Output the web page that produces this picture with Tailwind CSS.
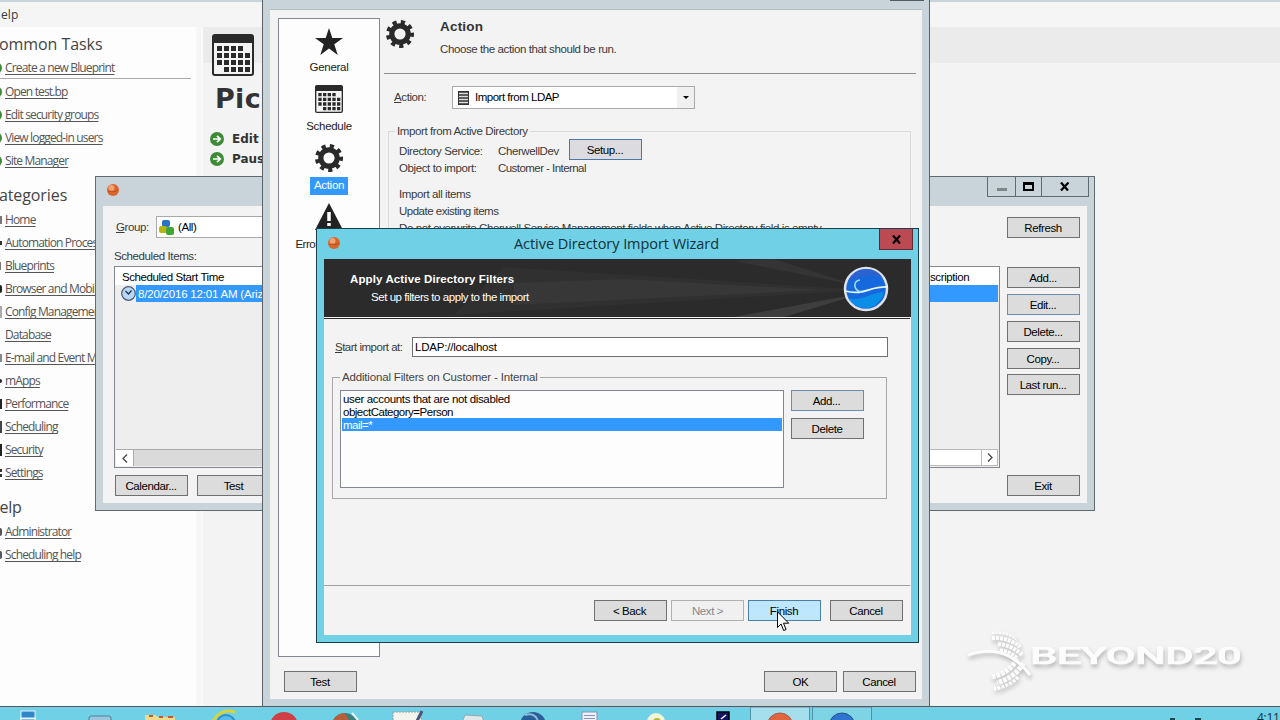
<!DOCTYPE html>
<html lang="en">
<head>
  <meta charset="UTF-8" />
  <meta name="viewport" content="width=device-width, initial-scale=1.0" />
  <title>Active Directory Import Wizard</title>
  <script src="https://cdn.jsdelivr.net/npm/@tailwindcss/browser@4"></script>
</head>
<body class="relative w-[1280px] h-[720px] overflow-hidden bg-[#f3f3f3] font-['Liberation_Sans',Arial,sans-serif] text-[11.5px] leading-[17px] tracking-[-0.4px] text-[#3a3a3a] cursor-default">

  <!-- Shared icons -->
  <svg class="hidden">
    <symbol id="gear" viewBox="0 0 28 28">
      <circle cx="14" cy="14" r="8.2" fill="none" stroke="#2a2a2a" stroke-width="5.2" />
      <circle cx="14" cy="14" r="12" fill="none" stroke="#2a2a2a" stroke-width="4" pathLength="18" stroke-dasharray="1 1" stroke-dashoffset="0.3" />
    </symbol>
    <symbol id="calendar" viewBox="0 0 42 42">
      <rect x="1" y="1" width="40" height="40" rx="2" fill="#f4f4f4" stroke="#2a2a2a" stroke-width="2" />
      <path d="M1 1h40v8H1z" fill="#2a2a2a" />
      <path d="M5 14.5h26M5 21.5h33M5 28.500h33M12 35.500h26" stroke="#2a2a2a" stroke-width="5" stroke-dasharray="5 2" />
    </symbol>
    <symbol id="ball" viewBox="0 0 14 14">
      <circle cx="7" cy="7" r="6" fill="#d9652c" />
      <circle cx="5.500" cy="5" r="3" fill="#f3a271" />
      <path d="M2 9c3-2 6 1 10-2" stroke="#b5501f" fill="none" />
    </symbol>
    <symbol id="go" viewBox="0 0 14 14">
      <circle cx="7" cy="7" r="7" fill="#3d8b37" />
      <path d="M3 7h7M7 3.800L10.300 7 7 10.200" stroke="#fff" stroke-width="1.700" fill="none" />
    </symbol>
  </svg>

  <!-- Main application -->
  <main class="flex flex-col h-[706px]">
    <div class="h-[2px] bg-[#c8d4d9]"></div>
    <div class="h-[25px] leading-[26px] -ml-[8px] bg-[#f5f5f5] font-['Open_Sans',sans-serif] text-[12px] tracking-[0.1px]">Help</div>
    <div class="flex grow">
      <nav class="w-[195px] bg-[#fdfdfd] font-['Open_Sans',sans-serif] text-[12px] tracking-[-0.85px] text-[#555] whitespace-nowrap">
        <h2 class="h-[30px] leading-[35px] -ml-[11px] text-[16px] tracking-[-0.07px] text-[#444]">Common Tasks</h2>
        <ul class="leading-[23px] underline underline-offset-2 [text-decoration-skip-ink:none]">
          <li class="flex items-center h-[22px] w-[191px] border-b border-[#aaa]"><svg class="size-3 -ml-[10px] mr-[3px]"><use href="#go" /></svg>Create a new Blueprint</li>
          <li class="flex items-center h-[23px] mt-px"><svg class="size-3 -ml-[10px] mr-[3px]"><use href="#go" /></svg>Open test.bp</li>
          <li class="flex items-center h-[23px]"><svg class="size-3 -ml-[10px] mr-[3px]"><use href="#go" /></svg>Edit security groups</li>
          <li class="flex items-center h-[23px]"><svg class="size-3 -ml-[10px] mr-[3px]"><use href="#go" /></svg>View logged-in users</li>
          <li class="flex items-center h-[23px]"><svg class="size-3 -ml-[10px] mr-[3px]"><use href="#go" /></svg>Site Manager</li>
        </ul>
        <h2 class="h-[36px] leading-[47px] -ml-[11px] text-[16px] tracking-[-0.1px] text-[#444]">Categories</h2>
        <ul class="leading-[23px] underline underline-offset-2 [text-decoration-skip-ink:none]">
          <li class="flex items-center h-[23px]"><i class="w-[2px] h-2 mr-[3px] bg-[#777]"></i>Home</li>
          <li class="flex items-center h-[23px]"><i class="w-[2px] h-1 mr-[3px] bg-[#333]"></i>Automation Processes</li>
          <li class="flex items-center h-[23px]"><i class="w-px h-2 mr-[4px] bg-[#777]"></i>Blueprints</li>
          <li class="flex items-center h-[23px]"><i class="w-[2px] h-2 mr-[3px] rounded-r-full bg-[#222]"></i>Browser and Mobile</li>
          <li class="flex items-center h-[23px]"><i class="w-[2px] h-3 mr-[3px] bg-[#aaa]"></i>Config Management</li>
          <li class="flex items-center h-[23px] pl-[5px]">Database</li>
          <li class="flex items-center h-[23px]"><i class="w-[2px] h-2 mr-[3px] bg-[#888]"></i>E-mail and Event Mon</li>
          <li class="flex items-center h-[23px]"><i class="w-[2px] h-1 mr-[3px] rounded-r-full bg-[#222]"></i>mApps</li>
          <li class="flex items-center h-[23px]"><i class="w-[2px] h-2.5 mr-[3px] bg-[#222]"></i>Performance</li>
          <li class="flex items-center h-[23px]"><i class="w-[2px] h-3 mr-[3px] bg-[#444]"></i>Scheduling</li>
          <li class="flex items-center h-[23px]"><i class="w-[2px] h-3 mr-[3px] bg-[#222]"></i>Security</li>
          <li class="flex items-center h-[23px]"><i class="w-[2px] h-2 mr-[3px] border-y-3 border-[#333]"></i>Settings</li>
        </ul>
        <h2 class="h-[36px] leading-[46px] -ml-[12px] text-[16px] tracking-[-0.3px] text-[#444]">Help</h2>
        <ul class="leading-[23px] underline underline-offset-2 [text-decoration-skip-ink:none]">
          <li class="flex items-center h-[23px]"><i class="w-[2px] h-2 mr-[3px] rounded-r-full bg-[#555]"></i>Administrator</li>
          <li class="flex items-center h-[23px]"><i class="w-[2px] h-2 mr-[3px] rounded-r-full bg-[#555]"></i>Scheduling help</li>
        </ul>
      </nav>
      <div class="w-[8px] bg-[#f5f5f5] border-x-2 border-[#fafafa]"></div>
      <section class="grow text-[#333]">
        <div class="h-[36px] pt-[7px] pl-[9px] bg-[#ebebeb]">
          <svg class="w-[42px] h-[42px]"><use href="#calendar" /></svg>
        </div>
        <h1 class="pl-[12px] mt-[18px] font-['DejaVu_Sans',sans-serif] font-bold text-[27px] leading-[36px] tracking-[0.3px]">Pick</h1>
        <ul class="pl-[7px] mt-[12px] font-['DejaVu_Sans',sans-serif] font-bold text-[12px] leading-[20px] tracking-[0px]">
          <li class="flex items-center gap-2"><svg class="size-3.5"><use href="#go" /></svg>Edit schedule</li>
          <li class="flex items-center gap-2"><svg class="size-3.5"><use href="#go" /></svg>Pause</li>
        </ul>
      </section>
    </div>
  </main>

  <!-- Scheduler window -->
  <section class="absolute left-[95px] top-[176px] w-[1000px] h-[335px] flex flex-col border border-[#5d6b72] bg-[#c8d4d9] px-[7px] pb-[7px]">
    <header class="flex justify-between h-[29px] shrink-0">
      <svg class="size-[14px] ml-[3px] mt-[6px]"><use href="#ball" /></svg>
      <div class="flex h-[20px] -mr-[2px] border border-t-0 border-[#5d6b72] divide-x divide-[#5d6b72] text-black">
        <div class="w-[28px] pt-[11px]"><div class="w-[10px] h-[3px] mx-auto bg-[#7d868a]"></div></div>
        <div class="w-[26px] pt-[5px]"><div class="w-[11px] h-[9px] mx-auto border-2 border-t-3 border-black"></div></div>
        <div class="w-[46px] pt-[5px]"><svg class="mx-auto" width="10" height="9" viewBox="0 0 10 9"><path d="M1 .5l7 8M8.500.5l-7.500 8" stroke="#000" stroke-width="2.200" /></svg></div>
      </div>
    </header>
    <div class="flex justify-between grow bg-[#f3f3f3] pl-[11px] pr-[7px] pt-[10px] text-black">
      <div class="w-[240px]">
        <div class="flex items-center h-[22px] text-[#3a3a3a]">
          <span class="w-[42px] pl-[2px]"><u>G</u>roup:</span>
          <div class="flex items-center grow h-[22px] border border-[#aaa] bg-white text-black gap-1 pl-[2px]">
            <svg width="15" height="15" viewBox="0 0 15 15"><rect x="3" y="0" width="8" height="7" rx="2" fill="#2a72c8" /><rect x="0" y="6" width="8" height="7" rx="2" fill="#b6b40e" /><rect x="7" y="7" width="8" height="8" rx="2" fill="#3fa535" /></svg>
            (All)
          </div>
        </div>
        <p class="mt-[10px] mb-px text-[#3a3a3a]">Scheduled Items:</p>
        <div class="flex flex-col h-[202px] border border-[#828790] bg-[#eee]">
          <div class="h-[18px] leading-[20px] pl-[7px] bg-white">Scheduled Start Time</div>
          <div class="flex items-center h-[17px] pl-[6px]">
            <svg class="shrink-0" width="15" height="15" viewBox="0 0 15 15"><circle cx="7.500" cy="7.500" r="6.800" fill="#b9d8f4" stroke="#51617c" stroke-width="1.300" /><path d="M4.500 5l3 3 3-3.500" stroke="#1d2f55" stroke-width="1.200" fill="none" /></svg>
            <div class="grow h-[17px] leading-[18px] pl-[2px] bg-[#3399ff] text-white tracking-[-0.2px] whitespace-nowrap overflow-hidden">8/20/2016 12:01 AM (Arizona)</div>
          </div>
          <div class="mt-auto mx-px mb-px flex h-[17px] bg-[#dadada] border-t border-[#aaa]">
            <div class="w-[18px] bg-white border-r border-[#aaa] flex items-center justify-center"><svg width="6" height="9" viewBox="0 0 6 9"><path d="M5 .5l-4 4 4 4" stroke="#444" stroke-width="1.300" fill="none" /></svg></div>
          </div>
        </div>
        <div class="flex gap-[9px] mt-[7px] ml-px text-center leading-[20px]">
          <div class="w-[73px] h-[21px] pr-px border border-[#707070] bg-[#dcdcdc]">Calendar...</div>
          <div class="w-[73px] h-[21px] border border-[#707070] bg-[#dcdcdc]">Test</div>
        </div>
      </div>
      <div class="flex gap-[7px]">
        <div class="w-[75px] flex flex-col h-[202px] mt-[50px] border border-[#828790] bg-[#eee]">
          <div class="h-[18px] leading-[20px] pl-[4px] bg-white">scription</div>
          <div class="h-[17px] mr-px bg-[#3399ff]"></div>
          <div class="mt-auto mr-px mb-px flex justify-end h-[17px] bg-white border border-[#bbb]">
            <div class="w-[16px] border-l border-[#bbb] flex items-center justify-center"><svg width="6" height="9" viewBox="0 0 6 9"><path d="M1 .5l4 4-4 4" stroke="#444" stroke-width="1.300" fill="none" /></svg></div>
          </div>
        </div>
        <div class="w-[73px] text-center leading-[20px]">
          <div class="h-[21px] mt-px pr-px border border-[#707070] bg-[#dcdcdc]">Refresh</div>
          <div class="h-[21px] mt-[29px] pr-px border border-[#707070] bg-[#dcdcdc]">Add...</div>
          <div class="h-[21px] mt-[6px] pr-px border border-[#6f8cae] bg-[#dcdcdc]">Edit...</div>
          <div class="h-[21px] mt-[6px] pr-px border border-[#707070] bg-[#dcdcdc]">Delete...</div>
          <div class="h-[21px] mt-[6px] pr-px border border-[#707070] bg-[#dcdcdc]">Copy...</div>
          <div class="h-[21px] mt-[5px] pr-px border border-[#707070] bg-[#dcdcdc]">Last run...</div>
          <div class="h-[21px] mt-[80px] pr-px border border-[#707070] bg-[#dcdcdc]">Exit</div>
        </div>
      </div>
    </div>
  </section>

  <!-- Scheduled item dialog -->
  <section class="absolute left-[262px] top-0 w-[668px] h-[707px] flex flex-col border border-t-0 border-[#5a6266] bg-[#c8d4d9] px-[7px] pb-[7px]">
    <header class="flex justify-end h-[9px] shrink-0"><div class="w-[34px] h-px mr-[-2px] bg-[#4e5b62]"></div></header>
    <div class="flex flex-col grow bg-[#f3f3f3] border-t border-[#b3bec3] px-[8px] pt-[8px]">
      <div class="flex gap-[4px]">
        <ul class="w-[102px] h-[639px] shrink-0 border border-[#828790] bg-[#fdfdfd] flex flex-col items-center text-center tracking-[-0.3px] text-[#222]">
          <li class="h-[59px] pt-[9px] flex flex-col items-center">
            <svg width="28" height="27" viewBox="0 0 28 27"><path d="M14 0l3.300 10H28l-8.700 6.200L22.700 27 14 20.500 5.300 27l3.400-10.800L0 10h10.700z" fill="#222" /></svg>
            <span class="mt-[4px]">General</span>
          </li>
          <li class="h-[59px] pt-[7px] flex flex-col items-center">
            <svg width="28" height="28"><use href="#calendar" /></svg>
            <span class="mt-[5px]">Schedule</span>
          </li>
          <li class="h-[59px] pt-[7px] flex flex-col items-center">
            <svg width="28" height="28"><use href="#gear" /></svg>
            <span class="mt-[5px] w-[38px] h-[18px] bg-[#3399ff] text-white">Action</span>
          </li>
          <li class="h-[59px] pt-[7px] flex flex-col items-center">
            <svg width="28" height="27" viewBox="0 0 28 27"><path d="M14 0l14 27H0z" fill="#222" /><path d="M14 9v9M14 20v3" stroke="#fff" stroke-width="3.500" /></svg>
            <span class="mt-[6px] tracking-[-0.5px]">Error Handling</span>
          </li>
        </ul>
        <div class="grow -mr-[2px]">
          <header class="flex h-[56px] border-b border-[#909090] pl-[2px] pt-[1px]">
            <svg class="mt-px" width="28" height="28"><use href="#gear" /></svg>
            <div class="ml-[26px]">
              <h2 class="font-bold text-[13.500px] leading-[16px] tracking-[0.2px] text-[#333]">Action</h2>
              <p class="mt-[6px]">Choose the action that should be run.</p>
            </div>
          </header>
          <div class="flex items-center h-[23px] mt-[12px] pl-[10px]">
            <span class="w-[58px]"><u>A</u>ction:</span>
            <div class="flex items-center w-[243px] h-[23px] border border-[#aaa] bg-white text-black">
              <svg class="ml-[5px] mr-[6px]" width="11" height="14" viewBox="0 0 11 14"><rect width="11" height="14" fill="#333" /><path d="M1 2.500h9M1 5.500h9M1 8.500h9M1 11.500h9" stroke="#ddd" stroke-width="1.500" /></svg>
              <span class="grow tracking-[-0.5px]">Import from LDAP</span>
              <div class="w-[17px] h-[21px] bg-[#f0f0f0] flex items-center justify-center"><svg width="6" height="3" viewBox="0 0 6 3"><path d="M0 0h6L3 3z" fill="#000" /></svg></div>
            </div>
          </div>
          <fieldset class="w-[523px] h-[140px] ml-[4px] mt-[14px] border border-[#dadada] pl-[10px] text-[11.500px]">
            <legend class="-ml-[4px] px-[2px]">Import from Active Directory</legend>
            <div class="flex">
              <div class="grid grid-cols-[99px_auto] pt-[3px]">
                <span>Directory Service:</span><span>CherwellDev</span>
                <span>Object to import:</span><span class="w-[91px] tracking-[-0.55px]">Customer - Internal</span>
              </div>
              <div class="w-[73px] h-[21px] -ml-[20px] -mt-px pr-px text-center leading-[21px] text-black border border-[#4a78a8] bg-[#dcdce0]">Setup...</div>
            </div>
            <p class="mt-[9px]">Import all items</p>
            <p class="tracking-[-0.5px]">Update existing items</p>
            <p>Do not overwrite Cherwell Service Management fields when Active Directory field is empty.</p>
          </fieldset>
        </div>
      </div>
      <footer class="flex mt-[14px] ml-[6px] mr-[-2px] text-center text-black leading-[20px]">
        <div class="w-[73px] h-[21px] pr-px border border-[#707070] bg-[#dcdcdc] mr-auto">Test</div>
        <div class="w-[73px] h-[21px] border border-[#707070] bg-[#dcdcdc] mr-[6px]">OK</div>
        <div class="w-[73px] h-[21px] pr-px border border-[#707070] bg-[#dcdcdc]">Cancel</div>
      </footer>
    </div>
  </section>

  <!-- Import wizard -->
  <section class="absolute left-[316px] top-[228px] w-[603px] h-[415px] flex flex-col border border-[#17404f] bg-[#70d1e6] px-[7px] pb-[7px]">
    <header class="relative flex justify-center h-[30px] shrink-0 font-['Open_Sans',sans-serif] text-[14.5px] leading-[29px] tracking-[-0.06px] text-[#12303a]">
      <svg class="absolute left-[3px] top-[7px] size-[14px]"><use href="#ball" /></svg>
      <span class="-ml-[2px]">Active Directory Import Wizard</span>
      <div class="absolute -right-[2px] top-0 w-[34px] h-[21px] border border-t-0 border-[#5d2a31] bg-[#bb4a52] flex items-center justify-center"><svg width="9" height="9" viewBox="0 0 9 9"><path d="M1 .5l7 8M8 .5l-7 8" stroke="#000" stroke-width="2.200" /></svg></div>
    </header>
    <div class="relative h-[58px] shrink-0 bg-[#2b2b2b] text-white">
      <svg class="absolute inset-0" width="587" height="58" viewBox="0 0 587 58">
        <path d="M540 31L180 8 130 56z" fill="#303030" />
        <path d="M500 31L300 20 190 24 190 46z" fill="#373737" />
        <path d="M535 27L410 2 450 0z" fill="#343434" />
        <path d="M540 34L410 58 460 58z" fill="#3e3e3e" />
        <circle cx="542" cy="30" r="21" fill="#1668dd" stroke="#dfe2ec" stroke-width="2.500" />
        <path d="M524 22a20 20 0 0 1 35-3c-8-4-20-3-35 3z" fill="#2c62d0" />
        <path d="M524 39c12 4 22-5 36-6-3 10-10 16-18 16-8 0-14-4-18-10z" fill="#0a8fe8" />
        <path d="M521 32c20 5 24-5 43-4" stroke="#e6f6ff" stroke-width="1.800" fill="none" />
        <path d="M537 33c-8-2-8-11-1-12" stroke="#9fe0fa" stroke-width="1.500" fill="none" />
      </svg>
      <div class="relative pl-[26px] pt-[12px]">
        <h3 class="font-bold text-[11.500px] leading-[17px] tracking-[0.12px]">Apply Active Directory Filters</h3>
        <p class="pl-[21px] leading-[18px] tracking-[-0.45px]">Set up filters to apply to the import</p>
      </div>
    </div>
    <div class="flex flex-col grow bg-[#f3f3f3]">
      <div class="h-px mt-px bg-[#2b2b2b] mr-px"></div>
      <div class="flex items-center mt-[18px] ml-[11px]">
        <span class="w-[77px] tracking-[-0.5px]"><u>S</u>tart import at:</span>
        <div class="w-[476px] h-[20px] leading-[19px] border border-[#707070] bg-white text-black pl-[2px] tracking-[-0.2px]">LDAP://localhost</div>
      </div>
      <fieldset class="w-[555px] h-[130px] ml-[8px] mt-[12px] border border-[#a8a8a8] px-[7px]">
        <legend class="px-[2px] text-[#444] tracking-[-0.17px]">Additional Filters on Customer - Internal</legend>
        <div class="flex gap-[7px] mt-[4px] text-black">
          <ul class="w-[444px] h-[98px] pt-px px-px border border-[#828790] bg-[#fdfdfd] leading-[15px]">
            <li class="h-[13px] pl-px tracking-[-0.35px]">user accounts that are not disabled</li>
            <li class="h-[13px] pl-px tracking-[-0.5px]">objectCategory=Person</li>
            <li class="h-[13px] pl-px tracking-[-0.5px] bg-[#3399ff] text-white">mail=*</li>
          </ul>
          <div class="w-[73px] text-center leading-[20px]">
            <div class="h-[21px] pr-[2px] border border-[#6f8cae] bg-[#dcdcdc]">Add...</div>
            <div class="h-[21px] mt-[7px] pr-px border border-[#707070] bg-[#dcdcdc]">Delete</div>
          </div>
        </div>
      </fieldset>
      <footer class="flex mt-auto h-[50px] mr-px border-t border-[#a0a0a0] pt-[14px] pr-[7px] justify-end text-center leading-[20px] text-black">
        <div class="w-[73px] h-[21px] pr-[2px] border border-[#707070] bg-[#dcdcdc]">&lt; Back</div>
        <div class="w-[73px] h-[21px] ml-[4px] border border-[#b0b0b0] bg-[#f0f0f0] text-[#888]">Next &gt;</div>
        <div class="w-[73px] h-[21px] ml-[4px] pr-px border border-[#4a80a8] bg-[#bee6fd]">Finish</div>
        <div class="w-[73px] h-[21px] ml-[9px] pr-px border border-[#707070] bg-[#dcdcdc]">Cancel</div>
      </footer>
    </div>
  </section>

  <!-- Watermark -->
  <svg class="absolute left-[960px] top-[625px] drop-shadow-[1px_3px_2px_rgba(0,0,0,0.25)]" width="290" height="70" viewBox="0 0 290 70">
    <g fill="none" stroke="#fcfcfc">
      <path d="M32 8q14-2 24 6" stroke-width="2.500" stroke-dasharray="2.500 1" />
      <path d="M32 13q16-1 28 9" stroke-width="4" stroke-dasharray="3 1" />
      <path d="M38 19q14 1 24 11" stroke-width="4" stroke-dasharray="3 1" />
      <path d="M40 25q10 1 18 9" stroke-width="3.500" stroke-dasharray="3 1" />
      <path d="M57 34q-7 14-26 18" stroke-width="5" stroke-dasharray="3.500 1.200" />
      <path d="M63 38q-7 14-26 20" stroke-width="5" stroke-dasharray="3.500 1.200" />
      <path d="M58 52q-8 9-24 12" stroke-width="3.500" stroke-dasharray="3 1.200" />
      <path d="M8 30q38-13 62 20" stroke-width="3" />
    </g>
    <text x="70" y="39" textLength="211" lengthAdjust="spacingAndGlyphs" fill="#fcfcfc" stroke="#fcfcfc" stroke-width="0.500" font-family="Roboto, sans-serif" font-weight="500" font-size="23">BEYOND20</text>
  </svg>

  <!-- Taskbar -->
  <footer class="absolute left-0 top-[706px] w-[1280px] h-[14px] border-t border-[#5b5560] bg-[#70d1e6] overflow-hidden">
    <svg width="1280" height="13" viewBox="0 0 1280 13">
      <rect x="21" y="4" width="14" height="14" fill="#2f86c8" stroke="#e4f5fa" />
      <path d="M20 11.500h16" stroke="#e4f5fa" stroke-width="2" />
      <rect x="89" y="9" width="22" height="10" rx="2" fill="#9cc6dd" stroke="#4b7f99" />
      <path d="M145 8h10l3 2h17v6h-30z" fill="#f0d98c" /><path d="M149 9h4m6 1h4m5 0h5" stroke="#c05a3a" stroke-width="2" />
      <path d="M213 14q8-13 22-9" stroke="#d9d23a" stroke-width="3" fill="none" /><circle cx="226" cy="17" r="9" fill="#5bbce9" stroke="#2f8fc8" stroke-width="2" />
      <circle cx="284" cy="19" r="14" fill="#cf3f47" />
      <circle cx="345" cy="19" r="13" fill="#3d7f7a" /><path d="M333 13q4-7 12-7l4 7z" fill="#b5603a" /><path d="M352 6l6 7" stroke="#e8f4f4" stroke-width="2" />
      <path d="M393 5h28v12h-28z" fill="#f4f4ee" stroke="#999" stroke-dasharray="2 1" /><path d="M422 4l-5 10" stroke="#47567d" stroke-width="3" />
      <path d="M465 8l17 1 2 6h-22z" fill="#dfe9ea" stroke="#91a9ad" />
      <circle cx="533" cy="18" r="13" fill="#2b5f98" /><path d="M525 8q10-3 13 6" stroke="#8db9dd" stroke-width="2" fill="none" />
      <rect x="582" y="5" width="15" height="12" fill="#eef3fb" stroke="#8b8fb5" /><path d="M584 8.500h11M584 11.500h11" stroke="#8b8fb5" />
      <circle cx="656" cy="15" r="9" fill="#f2f6d8" /><circle cx="657" cy="15" r="4" fill="#b4b436" />
      <rect x="717" y="5" width="12" height="12" fill="#141464" stroke="#000" stroke-width="1.500" /><path d="M721 12l5-4" stroke="#fff" stroke-width="1.500" />
      <rect x="750.500" y="0" width="59" height="16" fill="#a5dfed" stroke="#4c93a5" />
      <rect x="812.500" y="0" width="59" height="16" fill="#7ed3e5" stroke="#4c93a5" />
      <circle cx="780" cy="19" r="13" fill="#dd6540" stroke="#a85a44" />
      <circle cx="842" cy="19" r="13" fill="#2f74cf" stroke="#2a5487" />
      <path d="M1170 12h5M1195 12h6" stroke="#1d4552" stroke-width="2" />
      <text x="1257" y="15" font-family="Open Sans, sans-serif" font-size="12" letter-spacing="-0.3" fill="#12303a">4:11</text>
    </svg>
  </footer>

  <!-- Mouse pointer -->
  <svg class="absolute left-[777px] top-[611px]" width="13" height="21" viewBox="0 0 13 21"><path d="M.5.8v15.700l3.600-3.500 2.600 6.500 2.400-1-2.600-6.300h5.200z" fill="#fff" stroke="#000" /></svg>
</body>
</html>
